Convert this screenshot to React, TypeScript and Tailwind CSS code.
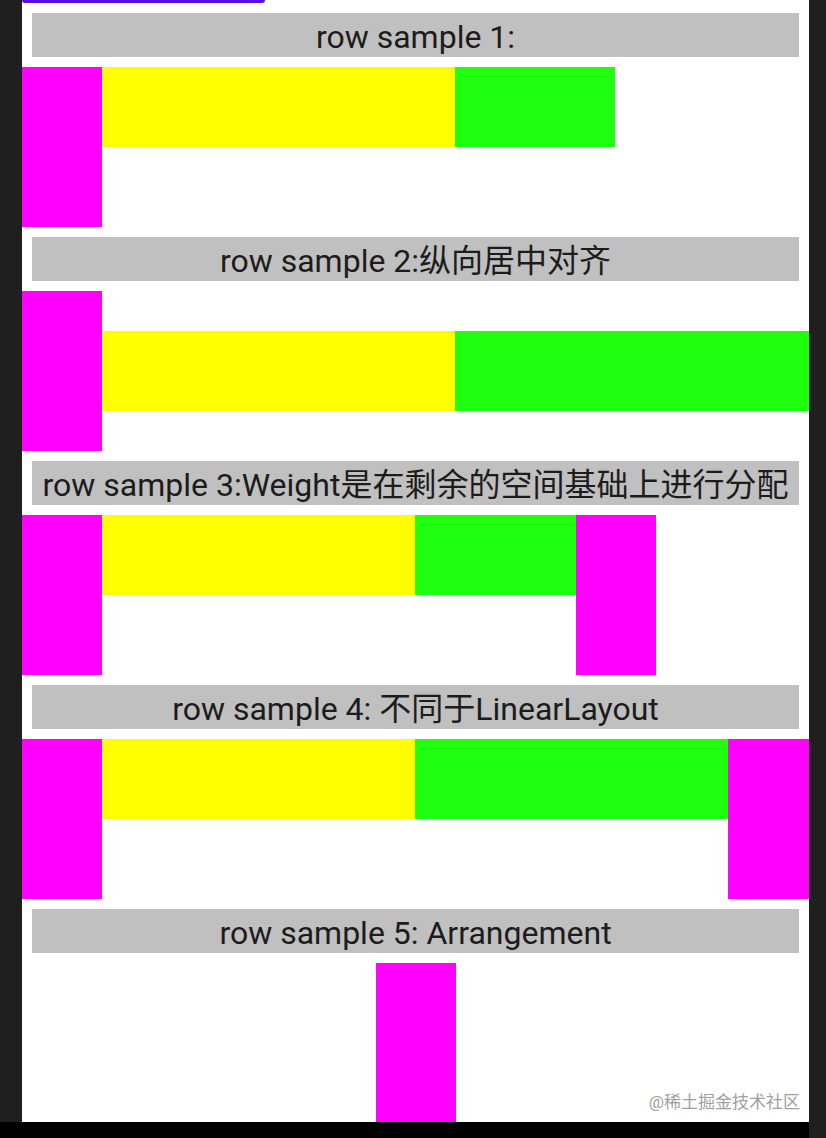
import React from 'react'

const font = { fontFamily: 'Roboto, "Noto Sans CJK SC", sans-serif' }

function Header({ title, first = false }: { title: string; first?: boolean }) {
  return (
    <div
      className={`mx-[10px] flex h-[44px] items-center justify-center bg-[#c0c0c0] pt-[4px] text-[32px] leading-none text-[#1c1c1c] whitespace-nowrap ${
        first ? 'mt-[9.5px]' : 'mt-[10px]'
      }`}
    >
      {title}
    </div>
  )
}

const Magenta = () => <div className="h-[160px] w-[80px] shrink-0 bg-[#ff00ff]" />

export default function App() {
  return (
    <div className="flex h-[1138px] w-[826px] flex-col bg-black" style={font}>
      <div className="flex h-[1122px] overflow-hidden">
        <div className="w-[22px] shrink-0 bg-[#1f1f1f]" />
        <div className="relative w-[787px] shrink-0 overflow-hidden bg-white">
          <div className="h-[3px] w-[243px] rounded-b-[6px] bg-[#5a0be6]" />

          {/* sample 1: default top alignment */}
          <Header title="row sample 1:" first />
          <div className="mt-[10px] flex h-[160px] items-start">
            <Magenta />
            <div className="h-[80px] w-[353px] bg-[#ffff00]" />
            <div className="h-[80px] w-[160px] bg-[#1fff0f]" />
          </div>

          {/* sample 2: vertical centering */}
          <Header title="row sample 2:纵向居中对齐" />
          <div className="mt-[10px] flex h-[160px] items-center">
            <Magenta />
            <div className="h-[80px] w-[353px] bg-[#ffff00]" />
            <div className="h-[80px] flex-1 bg-[#1fff0f]" />
          </div>

          {/* sample 3: weight */}
          <Header title="row sample 3:Weight是在剩余的空间基础上进行分配" />
          <div className="mt-[10px] flex h-[160px] items-start">
            <Magenta />
            <div className="h-[80px] w-[313px] bg-[#ffff00]" />
            <div className="h-[80px] w-[161px] bg-[#1fff0f]" />
            <Magenta />
          </div>

          {/* sample 4 */}
          <Header title="row sample 4: 不同于LinearLayout" />
          <div className="mt-[10px] flex h-[160px] items-start">
            <Magenta />
            <div className="h-[80px] w-[313px] bg-[#ffff00]" />
            <div className="h-[80px] w-[313px] bg-[#1fff0f]" />
            <div className="h-[160px] flex-1 bg-[#ff00ff]" />
          </div>

          {/* sample 5: arrangement */}
          <Header title="row sample 5: Arrangement" />
          <div className="mt-[10px] flex h-[160px] justify-center">
            <Magenta />
          </div>

          <div className="absolute bottom-[11px] right-[9px] text-[17px] leading-none text-[#a0a0a0]">
            @稀土掘金技术社区
          </div>
        </div>
        <div className="flex-1 bg-[#1f1f1f]" />
      </div>
      <div className="flex h-[16px]">
        <div className="w-[809px] bg-black" />
        <div className="flex-1 bg-[#1f1f1f]" />
      </div>
    </div>
  )
}
